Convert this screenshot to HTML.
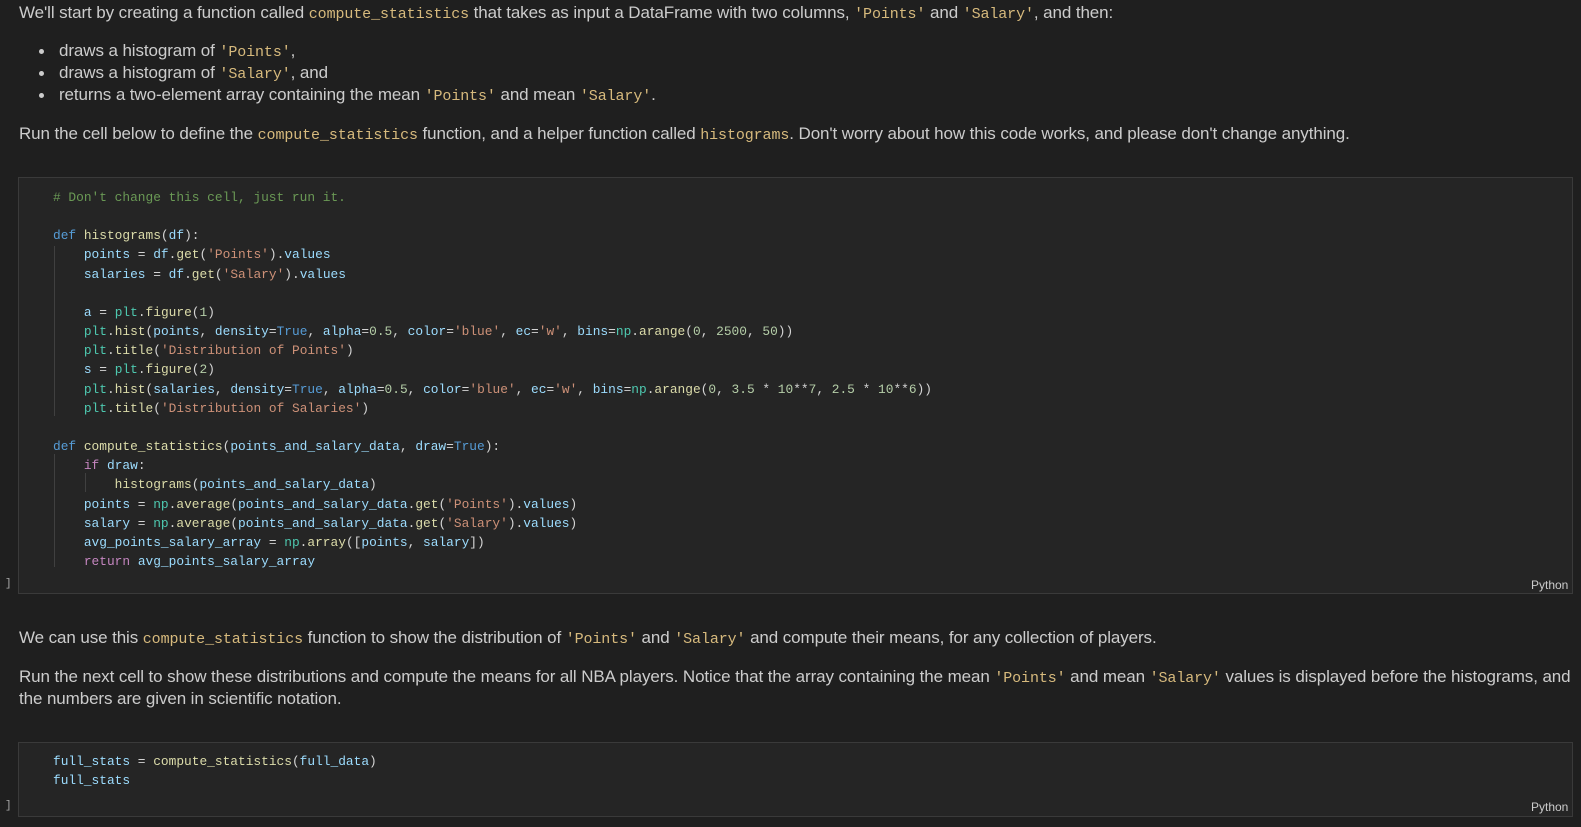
<!DOCTYPE html>
<html><head><meta charset="utf-8">
<style>
html,body{margin:0;padding:0;background:#1f1f1f;width:1581px;height:827px;overflow:hidden;position:relative}
.t{position:absolute;left:19px;white-space:nowrap;font-family:"Liberation Sans",sans-serif;font-size:17px;color:#cccccc;letter-spacing:-0.1px;line-height:20px}
.c{font-family:"Liberation Mono",monospace;font-size:15px;color:#d7ba7d;letter-spacing:-0.1px}
.cell{position:absolute;left:18px;width:1555px;background:#252525;border:1px solid #3a3a3a;box-sizing:border-box}
pre{margin:0;position:absolute;left:53px;font-family:"Liberation Mono",monospace;font-size:12.85px;line-height:19.15px;color:#d4d4d4}
.k{color:#569cd6}.f{color:#dcdcaa}.v{color:#9cdcfe}.s{color:#ce9178}.n{color:#b5cea8}.cm{color:#6a9955}.p{color:#c586c0}.m{color:#4ec9b0}
.py{position:absolute;font-family:"Liberation Sans",sans-serif;font-size:12px;color:#cccccc}
.br{position:absolute;left:5px;font-family:"Liberation Mono",monospace;font-size:11px;color:#aaa}
.g{position:absolute;width:1px;background:#404040}
.b{position:absolute;left:39px;width:5px;height:5px;border-radius:50%;background:#cccccc}
</style></head><body>
<div class="t" style="top:3px">We'll start by creating a function called <span class="c">compute_statistics</span> that takes as input a DataFrame with two columns, <span class="c">'Points'</span> and <span class="c">'Salary'</span>, and then:</div>
<div class="b" style="top:49px"></div><div class="t" style="top:41px;left:59px">draws a histogram of <span class="c">'Points'</span>,</div>
<div class="b" style="top:71px"></div><div class="t" style="top:63px;left:59px">draws a histogram of <span class="c">'Salary'</span>, and</div>
<div class="b" style="top:93px"></div><div class="t" style="top:85px;left:59px">returns a two-element array containing the mean <span class="c">'Points'</span> and mean <span class="c">'Salary'</span>.</div>
<div class="t" style="top:124px">Run the cell below to define the <span class="c">compute_statistics</span> function, and a helper function called <span class="c">histograms</span>. Don't worry about how this code works, and please don't change anything.</div>

<div class="cell" style="top:177px;height:417px"></div>
<div class="g" style="left:54px;top:246px;height:170px"></div>
<div class="g" style="left:54px;top:454px;height:113px"></div>
<div class="g" style="left:85px;top:473px;height:19px"></div>
<pre style="top:188px"><span class="cm"># Don't change this cell, just run it.</span>

<span class="k">def</span> <span class="f">histograms</span>(<span class="v">df</span>):
    <span class="v">points</span> = <span class="v">df</span>.<span class="f">get</span>(<span class="s">'Points'</span>).<span class="v">values</span>
    <span class="v">salaries</span> = <span class="v">df</span>.<span class="f">get</span>(<span class="s">'Salary'</span>).<span class="v">values</span>

    <span class="v">a</span> = <span class="m">plt</span>.<span class="f">figure</span>(<span class="n">1</span>)
    <span class="m">plt</span>.<span class="f">hist</span>(<span class="v">points</span>, <span class="v">density</span>=<span class="k">True</span>, <span class="v">alpha</span>=<span class="n">0.5</span>, <span class="v">color</span>=<span class="s">'blue'</span>, <span class="v">ec</span>=<span class="s">'w'</span>, <span class="v">bins</span>=<span class="m">np</span>.<span class="f">arange</span>(<span class="n">0</span>, <span class="n">2500</span>, <span class="n">50</span>))
    <span class="m">plt</span>.<span class="f">title</span>(<span class="s">'Distribution of Points'</span>)
    <span class="v">s</span> = <span class="m">plt</span>.<span class="f">figure</span>(<span class="n">2</span>)
    <span class="m">plt</span>.<span class="f">hist</span>(<span class="v">salaries</span>, <span class="v">density</span>=<span class="k">True</span>, <span class="v">alpha</span>=<span class="n">0.5</span>, <span class="v">color</span>=<span class="s">'blue'</span>, <span class="v">ec</span>=<span class="s">'w'</span>, <span class="v">bins</span>=<span class="m">np</span>.<span class="f">arange</span>(<span class="n">0</span>, <span class="n">3.5</span> * <span class="n">10</span>**<span class="n">7</span>, <span class="n">2.5</span> * <span class="n">10</span>**<span class="n">6</span>))
    <span class="m">plt</span>.<span class="f">title</span>(<span class="s">'Distribution of Salaries'</span>)

<span class="k">def</span> <span class="f">compute_statistics</span>(<span class="v">points_and_salary_data</span>, <span class="v">draw</span>=<span class="k">True</span>):
    <span class="p">if</span> <span class="v">draw</span>:
        <span class="f">histograms</span>(<span class="v">points_and_salary_data</span>)
    <span class="v">points</span> = <span class="m">np</span>.<span class="f">average</span>(<span class="v">points_and_salary_data</span>.<span class="f">get</span>(<span class="s">'Points'</span>).<span class="v">values</span>)
    <span class="v">salary</span> = <span class="m">np</span>.<span class="f">average</span>(<span class="v">points_and_salary_data</span>.<span class="f">get</span>(<span class="s">'Salary'</span>).<span class="v">values</span>)
    <span class="v">avg_points_salary_array</span> = <span class="m">np</span>.<span class="f">array</span>([<span class="v">points</span>, <span class="v">salary</span>])
    <span class="p">return</span> <span class="v">avg_points_salary_array</span></pre>
<div class="br" style="top:578px">]</div>
<div class="py" style="top:578px;left:1531px">Python</div>

<div class="t" style="top:628px">We can use this <span class="c">compute_statistics</span> function to show the distribution of <span class="c">'Points'</span> and <span class="c">'Salary'</span> and compute their means, for any collection of players.</div>
<div class="t" style="top:667px">Run the next cell to show these distributions and compute the means for all NBA players. Notice that the array containing the mean <span class="c">'Points'</span> and mean <span class="c">'Salary'</span> values is displayed before the histograms, and</div>
<div class="t" style="top:689px">the numbers are given in scientific notation.</div>

<div class="cell" style="top:742px;height:75px"></div>
<pre style="top:752px"><span class="v">full_stats</span> = <span class="f">compute_statistics</span>(<span class="v">full_data</span>)
<span class="v">full_stats</span></pre>
<div class="br" style="top:800px">]</div>
<div class="py" style="top:800px;left:1531px">Python</div>
</body></html>
